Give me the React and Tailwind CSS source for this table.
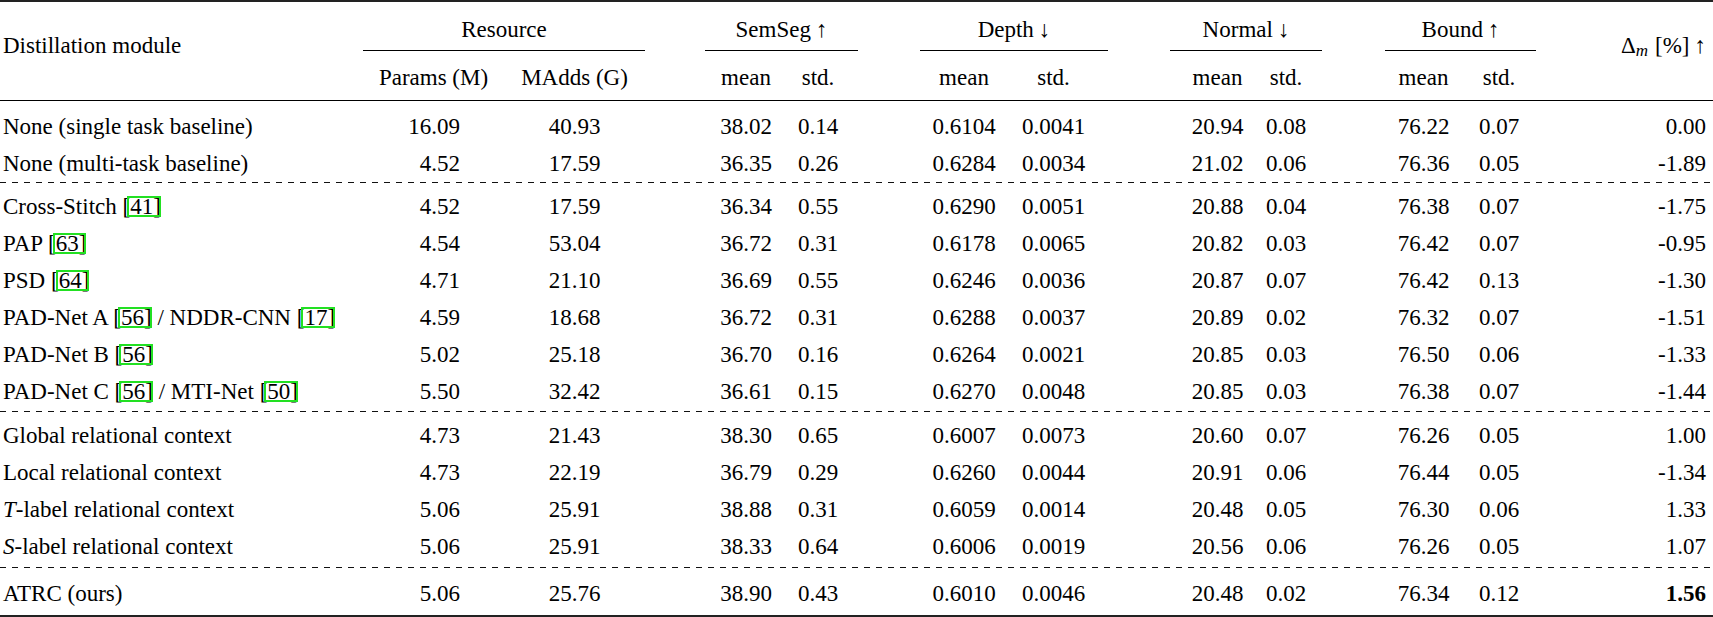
// Multi-task distillation comparison table (NYUD-v2 style), booktabs look.

const COLS =
  "grid grid-cols-[363px_141px_141px_60px_82px_71px_62px_88px_100px_62px_95px_57px_63px_77px_74px_177px]";

function Cite({ n }) {
  return (
    <>
      [
      <span className="relative">
        {n}]
        <span className="absolute left-[-3px] right-[0px] top-[2px] bottom-[2px] border-2 border-[#22e022]" />
      </span>
    </>
  );
}

const Up = () => <span className="ml-[5px]">↑</span>;
const Down = () => <span className="ml-[5px]">↓</span>;

const GROUPS = [
  [
    { label: "None (single task baseline)", v: ["16.09", "40.93", "38.02", "0.14", "0.6104", "0.0041", "20.94", "0.08", "76.22", "0.07", "0.00"] },
    { label: "None (multi-task baseline)", v: ["4.52", "17.59", "36.35", "0.26", "0.6284", "0.0034", "21.02", "0.06", "76.36", "0.05", "-1.89"] },
  ],
  [
    { label: <>Cross-Stitch <Cite n="41" /></>, v: ["4.52", "17.59", "36.34", "0.55", "0.6290", "0.0051", "20.88", "0.04", "76.38", "0.07", "-1.75"] },
    { label: <>PAP <Cite n="63" /></>, v: ["4.54", "53.04", "36.72", "0.31", "0.6178", "0.0065", "20.82", "0.03", "76.42", "0.07", "-0.95"] },
    { label: <>PSD <Cite n="64" /></>, v: ["4.71", "21.10", "36.69", "0.55", "0.6246", "0.0036", "20.87", "0.07", "76.42", "0.13", "-1.30"] },
    { label: <>PAD-Net A <Cite n="56" /> / NDDR-CNN <Cite n="17" /></>, v: ["4.59", "18.68", "36.72", "0.31", "0.6288", "0.0037", "20.89", "0.02", "76.32", "0.07", "-1.51"] },
    { label: <>PAD-Net B <Cite n="56" /></>, v: ["5.02", "25.18", "36.70", "0.16", "0.6264", "0.0021", "20.85", "0.03", "76.50", "0.06", "-1.33"] },
    { label: <>PAD-Net C <Cite n="56" /> / MTI-Net <Cite n="50" /></>, v: ["5.50", "32.42", "36.61", "0.15", "0.6270", "0.0048", "20.85", "0.03", "76.38", "0.07", "-1.44"] },
  ],
  [
    { label: "Global relational context", v: ["4.73", "21.43", "38.30", "0.65", "0.6007", "0.0073", "20.60", "0.07", "76.26", "0.05", "1.00"] },
    { label: "Local relational context", v: ["4.73", "22.19", "36.79", "0.29", "0.6260", "0.0044", "20.91", "0.06", "76.44", "0.05", "-1.34"] },
    { label: <><i>T</i>-label relational context</>, v: ["5.06", "25.91", "38.88", "0.31", "0.6059", "0.0014", "20.48", "0.05", "76.30", "0.06", "1.33"] },
    { label: <><i>S</i>-label relational context</>, v: ["5.06", "25.91", "38.33", "0.64", "0.6006", "0.0019", "20.56", "0.06", "76.26", "0.05", "1.07"] },
  ],
  [
    { label: "ATRC (ours)", v: ["5.06", "25.76", "38.90", "0.43", "0.6010", "0.0046", "20.48", "0.02", "76.34", "0.12", "1.56"], best: true },
  ],
];

function Row({ row }) {
  const [params, madds, sm, ss, dm_, ds, nm, ns, bm, bs, delta] = row.v;
  return (
    <div className={`${COLS} h-[37px] items-center`}>
      <div className="pl-[3px] whitespace-nowrap">{row.label}</div>
      <div className="text-right pr-[44px]">{params}</div>
      <div className="text-center">{madds}</div>
      <div />
      <div className="text-center">{sm}</div>
      <div className="text-center pr-[9px]">{ss}</div>
      <div />
      <div className="text-center">{dm_}</div>
      <div className="text-center pr-[9px]">{ds}</div>
      <div />
      <div className="text-center">{nm}</div>
      <div className="text-center pr-[15px]">{ns}</div>
      <div />
      <div className="text-center">{bm}</div>
      <div className="text-center">{bs}</div>
      <div className={`text-right pr-[7px] ${row.best ? "font-bold" : ""}`}>{delta}</div>
    </div>
  );
}

function Dashed({ h = "h-[6px]", offset = "mt-[1px]" }) {
  return (
    <div className={h}>
      <div className={`${offset} h-px bg-[repeating-linear-gradient(to_right,#111_0px,#111_6px,transparent_6px,transparent_12px)]`} />
    </div>
  );
}

export default function App() {
  return (
    <div className="w-[1713px] bg-white text-black font-[Liberation_Serif,Times_New_Roman,serif] text-[23px] leading-none">
      <div className="h-[2px] bg-[#222]" />

      {/* header */}
      <div className={`${COLS} grid-rows-[49px_49px] border-b border-black`}>
        <div className="row-span-2 flex items-center pl-[3px] pb-[12px]">Distillation module</div>
        <div className="col-span-2 flex items-center justify-center pt-[6px] border-b border-black">Resource</div>
        <div />
        <div className="col-span-2 flex items-center justify-center pt-[6px] border-b border-black">SemSeg<Up /></div>
        <div />
        <div className="col-span-2 flex items-center justify-center pt-[6px] border-b border-black">Depth<Down /></div>
        <div />
        <div className="col-span-2 flex items-center justify-center pt-[6px] border-b border-black">Normal<Down /></div>
        <div />
        <div className="col-span-2 flex items-center justify-center pt-[6px] border-b border-black">Bound<Up /></div>
        <div className="row-span-2 flex items-center justify-end pr-[7px] pb-[12px]">
          Δ<span className="italic text-[17px] relative top-[5px]">m</span>
          <span className="ml-[7px]">[%]</span>
          <Up />
        </div>

        <div className="col-start-2 flex items-center justify-center pt-[4px]">Params (M)</div>
        <div className="flex items-center justify-center pt-[4px]">MAdds (G)</div>
        <div />
        <div className="flex items-center justify-center pt-[4px]">mean</div>
        <div className="flex items-center justify-center pt-[4px] pr-[9px]">std.</div>
        <div />
        <div className="flex items-center justify-center pt-[4px]">mean</div>
        <div className="flex items-center justify-center pt-[4px] pr-[9px]">std.</div>
        <div />
        <div className="flex items-center justify-center pt-[4px]">mean</div>
        <div className="flex items-center justify-center pt-[4px] pr-[15px]">std.</div>
        <div />
        <div className="flex items-center justify-center pt-[4px]">mean</div>
        <div className="flex items-center justify-center pt-[4px]">std.</div>
      </div>

      {/* body */}
      <div className="pt-[7px] pb-[3px] border-b-2 border-[#222]">
        {GROUPS[0].map((r, i) => <Row key={i} row={r} />)}
        <Dashed offset="mt-0" />
        {GROUPS[1].map((r, i) => <Row key={i} row={r} />)}
        <Dashed />
        {GROUPS[2].map((r, i) => <Row key={i} row={r} />)}
        <Dashed h="h-[8px]" offset="mt-[2px]" />
        {GROUPS[3].map((r, i) => <Row key={i} row={r} />)}
      </div>
    </div>
  );
}
